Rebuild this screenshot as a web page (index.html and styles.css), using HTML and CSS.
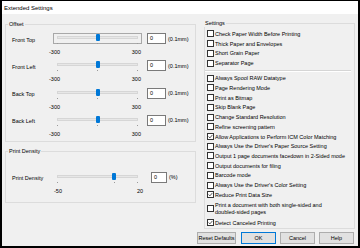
FILE: index.html
```html
<!DOCTYPE html>
<html lang="en">
<head>
<meta charset="utf-8">
<title>Extended Settings</title>
<link rel="stylesheet" href="styles.css">
</head>
<body>
<div class="window">
  <div class="titlebar">Extended Settings</div>
  <div class="content">
    <div class="left">
      <div class="group offset">
        <span class="legend">Offset</span>
        <div class="srow">
          <div class="srow-main">
            <span class="slabel">Front Top</span>
            <div class="slider focus">
              <div class="track"><span class="thumb" style="left:50%"></span></div>
              <div class="ticks"><i></i><i></i><i></i></div>
            </div>
            <span class="num">0</span>
            <span class="unit">(0.1mm)</span>
          </div>
          <div class="scale"><span>-300</span><span>300</span></div>
        </div>
        <div class="srow">
          <div class="srow-main">
            <span class="slabel">Front Left</span>
            <div class="slider">
              <div class="track"><span class="thumb" style="left:50%"></span></div>
              <div class="ticks"><i></i><i></i><i></i></div>
            </div>
            <span class="num">0</span>
            <span class="unit">(0.1mm)</span>
          </div>
          <div class="scale"><span>-300</span><span>300</span></div>
        </div>
        <div class="srow">
          <div class="srow-main">
            <span class="slabel">Back Top</span>
            <div class="slider">
              <div class="track"><span class="thumb" style="left:50%"></span></div>
              <div class="ticks"><i></i><i></i><i></i></div>
            </div>
            <span class="num">0</span>
            <span class="unit">(0.1mm)</span>
          </div>
          <div class="scale"><span>-300</span><span>300</span></div>
        </div>
        <div class="srow">
          <div class="srow-main">
            <span class="slabel">Back Left</span>
            <div class="slider">
              <div class="track"><span class="thumb" style="left:50%"></span></div>
              <div class="ticks"><i></i><i></i><i></i></div>
            </div>
            <span class="num">0</span>
            <span class="unit">(0.1mm)</span>
          </div>
          <div class="scale"><span>-300</span><span>300</span></div>
        </div>
      </div>
      <div class="group density">
        <span class="legend">Print Density</span>
        <div class="srow">
          <div class="srow-main">
            <span class="slabel">Print Density</span>
            <div class="slider">
              <div class="track"><span class="thumb" style="left:71.4%"></span></div>
              <div class="ticks density-ticks"><i></i><i></i><i></i></div>
            </div>
            <span class="num num-small">0</span>
            <span class="unit">(%)</span>
          </div>
          <div class="scale scale-density"><span>-50</span><span>20</span></div>
        </div>
      </div>
    </div>
    <div class="right">
      <div class="group settings">
        <span class="legend">Settings</span>
        <div class="check"><span class="box"></span><span>Check Paper Width Before Printing</span></div>
        <div class="check"><span class="box"></span><span>Thick Paper and Envelopes</span></div>
        <div class="check"><span class="box"></span><span>Short Grain Paper</span></div>
        <div class="check"><span class="box"></span><span>Separator Page</span></div>
        <div class="sep"></div>
        <div class="check"><span class="box"></span><span>Always Spool RAW Datatype</span></div>
        <div class="check"><span class="box"></span><span>Page Rendering Mode</span></div>
        <div class="check"><span class="box"></span><span>Print as Bitmap</span></div>
        <div class="check"><span class="box"></span><span>Skip Blank Page</span></div>
        <div class="check"><span class="box"></span><span>Change Standard Resolution</span></div>
        <div class="check"><span class="box"></span><span>Refine screening pattern</span></div>
        <div class="check"><span class="box checked"><svg viewBox="0 0 5 5" width="5" height="5"><path d="M0.6 2.5 L1.9 3.9 L4.4 0.9" fill="none" stroke="#333" stroke-width="0.8"/></svg></span><span>Allow Applications to Perform ICM Color Matching</span></div>
        <div class="check"><span class="box"></span><span>Always Use the Driver's Paper Source Setting</span></div>
        <div class="check"><span class="box"></span><span>Output 1 page documents facedown in 2-Sided mode</span></div>
        <div class="check"><span class="box"></span><span>Output documents for filing</span></div>
        <div class="check"><span class="box"></span><span>Barcode mode</span></div>
        <div class="check"><span class="box"></span><span>Always Use the Driver's Color Setting</span></div>
        <div class="check"><span class="box checked"><svg viewBox="0 0 5 5" width="5" height="5"><path d="M0.6 2.5 L1.9 3.9 L4.4 0.9" fill="none" stroke="#333" stroke-width="0.8"/></svg></span><span>Reduce Print Data Size</span></div>
        <div class="check multi"><span class="box"></span><span class="multi-text">Print a document with both single-sided and<br>doubled-sided pages</span></div>
        <div class="check"><span class="box checked"><svg viewBox="0 0 5 5" width="5" height="5"><path d="M0.6 2.5 L1.9 3.9 L4.4 0.9" fill="none" stroke="#333" stroke-width="0.8"/></svg></span><span>Detect Canceled Printing</span></div>
      </div>
    </div>
    <div class="buttons">
      <button class="btn wide">Reset Defaults</button>
      <button class="btn default">OK</button>
      <button class="btn">Cancel</button>
      <button class="btn">Help</button>
    </div>
  </div>
</div>
</body>
</html>
```
FILE: styles.css
```css
* { box-sizing: border-box; margin: 0; padding: 0; }
html, body { width: 360px; height: 248px; overflow: hidden; }
body {
  font-family: "Liberation Sans", Arial, sans-serif;
  font-size: 5.5px;
  color: #000;
  background: #fff;
}
.window {
  width: 360px;
  height: 248px;
  border-style: solid;
  border-color: #000;
  border-width: 1px 2px 2px 2px;
  background: #f0f0f0;
  display: flex;
  flex-direction: column;
}
.titlebar {
  height: 13px;
  background: #fff;
  padding-left: 2px;
  font-size: 6px;
  line-height: 14px;
  color: #000;
}
.content {
  flex: 1;
  display: grid;
  grid-template-columns: 191px 151px;
  column-gap: 8px;
  padding-left: 3px;
  align-content: start;
}
.left {
  padding-top: 10px;
  display: flex;
  flex-direction: column;
  gap: 9px;
}
.right { padding-top: 9px; }
.group {
  position: relative;
  border: 1px solid #dcdcdc;
}
.legend {
  position: absolute;
  top: -4px;
  left: 2px;
  line-height: 7px;
  padding: 0 1px;
  background: #f0f0f0;
  white-space: nowrap;
}
.offset {
  padding: 8px 0 4px 6px;
  display: flex;
  flex-direction: column;
  gap: 5.33px;
}
.density { padding: 20px 0 8px 6px; }
.srow-main {
  display: flex;
  align-items: center;
  height: 11px;
}
.slabel { width: 41px; padding-top: 2px; flex: none; }
.slider {
  width: 89px;
  height: 11px;
  border: 1px solid transparent;
  padding: 0 3px;
  flex: none;
}
.slider.focus { border-color: #a8a8a8; }
.track {
  position: relative;
  margin-top: 2px;
  height: 3px;
  background: #e7e7e7;
  border: 1px solid #d6d6d6;
}
.thumb {
  position: absolute;
  top: -3px;
  width: 4px;
  height: 7px;
  margin-left: -2px;
  background: #0078d7;
  border-radius: 1px;
}
.ticks {
  display: grid;
  grid-template-columns: 1px 1fr 1px 1fr 1px;
  margin-top: 4px;
  height: 1px;
}
.ticks i { width: 1px; height: 1px; background: #9a9a9a; }
.ticks i:nth-child(1) { grid-column: 1; }
.ticks i:nth-child(2) { grid-column: 3; }
.ticks i:nth-child(3) { grid-column: 5; }
.density-ticks { grid-template-columns: 1px 5fr 1px 2fr 1px; }
.num {
  margin-left: 5px;
  width: 19px;
  height: 11px;
  background: #fff;
  border: 1px solid #7a7a7a;
  padding-left: 2px;
  line-height: 9px;
  flex: none;
}
.num-small { margin-left: 9px; width: 16px; }
.unit { margin-left: 2px; white-space: nowrap; }
.scale {
  display: flex;
  justify-content: space-between;
  margin: 5px 0 0 37px;
  width: 92px;
  line-height: 6px;
}
.scale-density { margin-left: 42px; width: 89px; }
.settings { padding: 5px 0 1px 2px; }
.settings .legend { left: -1px; }
.check {
  display: flex;
  align-items: center;
  gap: 1px;
  height: 9.72px;
  white-space: nowrap;
}
.check.multi { height: 18px; }
.multi-text { line-height: 7px; }
.box {
  width: 7px;
  height: 7px;
  border: 1px solid #333;
  background: #fff;
  flex: none;
  display: flex;
}
.box svg { display: block; }
.sep {
  margin: 2px 3px 1.5px -2px;
  border-top: 1px solid #d5d5d5;
  border-bottom: 1px solid #fff;
}
.buttons {
  grid-column: 1 / -1;
  display: flex;
  justify-content: flex-end;
  gap: 4px;
  margin-top: 3px;
  padding-right: 1px;
}
.btn {
  height: 12px;
  width: 35px;
  background: #e1e1e1;
  border: 1px solid #adadad;
  text-align: center;
  line-height: 10px;
  font: inherit;
  color: #000;
}
.btn.wide { width: 39px; margin-right: 1px; }
.btn.default { border-color: #0078d7; }
```
